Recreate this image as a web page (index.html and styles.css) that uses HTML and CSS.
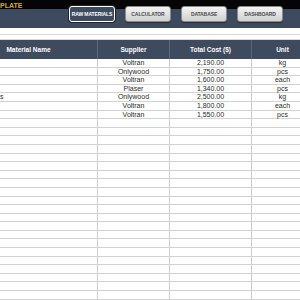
FILE: index.html
```html
<!DOCTYPE html>
<html lang="en">
<head>
  <meta charset="UTF-8">
  <title>Raw Materials</title>
  <link rel="stylesheet" href="styles.css">
</head>
<body>
  <div class="topbar">
    <div class="title">PLATE</div>
    <div class="nav">
      <div class="nav-btn active">RAW MATERIALS</div>
      <div class="nav-btn">CALCULATOR</div>
      <div class="nav-btn">DATABASE</div>
      <div class="nav-btn">DASHBOARD</div>
    </div>
  </div>

  <div class="spacer">
    <div class="spacer-row"></div>
    <div class="spacer-row"></div>
  </div>

  <div class="sheet">
    <div class="row head">
      <div class="cell name">Material Name</div>
      <div class="cell supplier">Supplier</div>
      <div class="cell cost">Total Cost ($)</div>
      <div class="cell unit">Unit</div>
    </div>

    <div class="row"><div class="cell name left"></div><div class="cell supplier">Voltran</div><div class="cell cost">2,190.00</div><div class="cell unit">kg</div></div>
    <div class="row"><div class="cell name left"></div><div class="cell supplier">Onlywood</div><div class="cell cost">1,750.00</div><div class="cell unit">pcs</div></div>
    <div class="row"><div class="cell name left"></div><div class="cell supplier">Voltran</div><div class="cell cost">1,600.00</div><div class="cell unit">each</div></div>
    <div class="row"><div class="cell name left"></div><div class="cell supplier">Plaser</div><div class="cell cost">1,340.00</div><div class="cell unit">pcs</div></div>
    <div class="row"><div class="cell name left">Copper Pipes</div><div class="cell supplier">Onlywood</div><div class="cell cost">2,500.00</div><div class="cell unit">kg</div></div>
    <div class="row"><div class="cell name left"></div><div class="cell supplier">Voltran</div><div class="cell cost">1,800.00</div><div class="cell unit">each</div></div>
    <div class="row"><div class="cell name left"></div><div class="cell supplier">Voltran</div><div class="cell cost">1,550.00</div><div class="cell unit">pcs</div></div>

    <div class="row"><div class="cell name"></div><div class="cell supplier"></div><div class="cell cost"></div><div class="cell unit"></div></div>
    <div class="row"><div class="cell name"></div><div class="cell supplier"></div><div class="cell cost"></div><div class="cell unit"></div></div>
    <div class="row"><div class="cell name"></div><div class="cell supplier"></div><div class="cell cost"></div><div class="cell unit"></div></div>
    <div class="row"><div class="cell name"></div><div class="cell supplier"></div><div class="cell cost"></div><div class="cell unit"></div></div>
    <div class="row"><div class="cell name"></div><div class="cell supplier"></div><div class="cell cost"></div><div class="cell unit"></div></div>
    <div class="row"><div class="cell name"></div><div class="cell supplier"></div><div class="cell cost"></div><div class="cell unit"></div></div>
    <div class="row"><div class="cell name"></div><div class="cell supplier"></div><div class="cell cost"></div><div class="cell unit"></div></div>
    <div class="row"><div class="cell name"></div><div class="cell supplier"></div><div class="cell cost"></div><div class="cell unit"></div></div>
    <div class="row"><div class="cell name"></div><div class="cell supplier"></div><div class="cell cost"></div><div class="cell unit"></div></div>
    <div class="row"><div class="cell name"></div><div class="cell supplier"></div><div class="cell cost"></div><div class="cell unit"></div></div>
    <div class="row"><div class="cell name"></div><div class="cell supplier"></div><div class="cell cost"></div><div class="cell unit"></div></div>
    <div class="row"><div class="cell name"></div><div class="cell supplier"></div><div class="cell cost"></div><div class="cell unit"></div></div>
    <div class="row"><div class="cell name"></div><div class="cell supplier"></div><div class="cell cost"></div><div class="cell unit"></div></div>
    <div class="row"><div class="cell name"></div><div class="cell supplier"></div><div class="cell cost"></div><div class="cell unit"></div></div>
    <div class="row"><div class="cell name"></div><div class="cell supplier"></div><div class="cell cost"></div><div class="cell unit"></div></div>
    <div class="row"><div class="cell name"></div><div class="cell supplier"></div><div class="cell cost"></div><div class="cell unit"></div></div>
    <div class="row"><div class="cell name"></div><div class="cell supplier"></div><div class="cell cost"></div><div class="cell unit"></div></div>
    <div class="row"><div class="cell name"></div><div class="cell supplier"></div><div class="cell cost"></div><div class="cell unit"></div></div>
    <div class="row"><div class="cell name"></div><div class="cell supplier"></div><div class="cell cost"></div><div class="cell unit"></div></div>
    <div class="row"><div class="cell name"></div><div class="cell supplier"></div><div class="cell cost"></div><div class="cell unit"></div></div>
    <div class="row"><div class="cell name"></div><div class="cell supplier"></div><div class="cell cost"></div><div class="cell unit"></div></div>
  </div>
</body>
</html>
```

FILE: styles.css
```css
body {
  margin: 0;
  width: 300px;
  height: 300px;
  overflow: hidden;
  background: #ffffff;
  font-family: "Liberation Sans", Arial, sans-serif;
}

.topbar {
  height: 28px;
  background: linear-gradient(#050505 0, #050505 9px, #3e4a5e 9px, #3e4a5e 100%);
  display: flex;
  align-items: flex-start;
}

.title {
  width: 69px;
  flex-shrink: 0;
  padding-top: 2px;
  color: #d4a92a;
  font-size: 7px;
  font-weight: bold;
  line-height: 7px;
}

.nav {
  display: flex;
  gap: 10px;
  padding-top: 6px;
}

.nav-btn {
  width: 46px;
  height: 16px;
  box-sizing: border-box;
  border: 1px solid #8c8c8c;
  border-radius: 3px;
  background: linear-gradient(#f4f4f4, #cfcfcf);
  color: #4a4a4a;
  font-size: 5px;
  font-weight: bold;
  letter-spacing: -0.1px;
  white-space: nowrap;
  display: flex;
  align-items: center;
  justify-content: center;
  box-shadow: 0 1px 1px rgba(0, 0, 0, 0.4);
}

.nav-btn.active {
  background: #3e4a5e;
  color: #ffffff;
  border: 1.5px solid #ffffff;
  box-shadow: 0 0 0 1px #1e2430;
}

.spacer {
  height: 12px;
  padding-top: 2px;
  box-sizing: border-box;
}

.spacer-row {
  height: 4px;
  border-bottom: 1px solid #d6d6d6;
}

.sheet {
  margin-left: -40px;
  font-size: 7px;
  color: #2a2a2a;
}

.row {
  display: flex;
  height: 8.6px;
  box-sizing: border-box;
  border-bottom: 1px solid #d2d2d2;
}

.row.head {
  height: 19px;
  background: #3e4a5e;
  color: #ffffff;
  font-size: 6.5px;
  font-weight: bold;
  border-bottom: none;
}

.cell {
  flex-shrink: 0;
  box-sizing: border-box;
  border-right: 1px solid #cdcdcd;
  text-align: center;
  line-height: 8.2px;
  white-space: nowrap;
}

.head .cell {
  line-height: 19px;
  border-right: 1px solid #5b6679;
}

.cell.left {
  text-align: left;
  padding-left: 1px;
}

.name {
  width: 138px;
  overflow: hidden;
}

.supplier {
  width: 72px;
}

.cost {
  width: 82px;
}

.unit {
  width: 62px;
}
```
